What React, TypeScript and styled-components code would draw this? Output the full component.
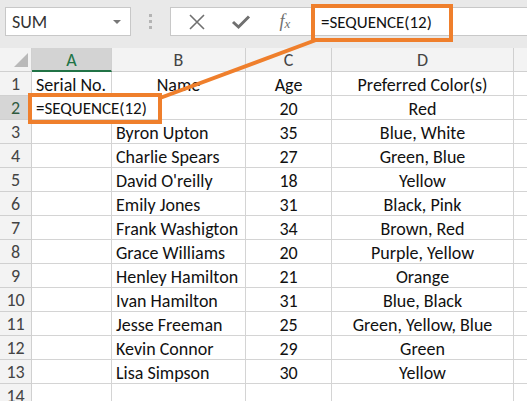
import React from "react";
import styled, { createGlobalStyle } from "styled-components";

const GlobalStyle = createGlobalStyle`
  html, body { margin: 0; padding: 0; background: #ffffff; }
  body { font-family: Carlito, "Open Sans", "Liberation Sans", sans-serif; }
`;

const ORANGE = "#ef7f2c";
const GREEN = "#217346";

type Row = { name: string; age: string; color: string };

const rows: Row[] = [
  { name: "Name", age: "Age", color: "Preferred Color(s)" },
  { name: "", age: "20", color: "Red" },
  { name: "Byron Upton", age: "35", color: "Blue, White" },
  { name: "Charlie Spears", age: "27", color: "Green, Blue" },
  { name: "David O'reilly", age: "18", color: "Yellow" },
  { name: "Emily Jones", age: "31", color: "Black, Pink" },
  { name: "Frank Washigton", age: "34", color: "Brown, Red" },
  { name: "Grace Williams", age: "20", color: "Purple, Yellow" },
  { name: "Henley Hamilton", age: "21", color: "Orange" },
  { name: "Ivan Hamilton", age: "31", color: "Blue, Black" },
  { name: "Jesse Freeman", age: "25", color: "Green, Yellow, Blue" },
  { name: "Kevin Connor", age: "29", color: "Green" },
  { name: "Lisa Simpson", age: "30", color: "Yellow" },
  { name: "", age: "", color: "" },
];

const App = () => {
  return (
    <>
      <GlobalStyle />
      <Page>
        <Toolbar>
          <NameBox>
            <span>SUM</span>
            <Caret />
          </NameBox>
          <Grip>
            <i />
            <i />
            <i />
          </Grip>
          <FormulaBar>
            <BarButton>
              <svg width="16" height="16" viewBox="0 0 16 16">
                <path d="M1 1 L15 15 M15 1 L1 15" stroke="#707070" strokeWidth="1.6" fill="none" />
              </svg>
            </BarButton>
            <BarButton>
              <svg width="20" height="16" viewBox="0 0 20 16">
                <path d="M2 8 L7.5 13 L18 2.5" stroke="#707070" strokeWidth="3" fill="none" />
              </svg>
            </BarButton>
            <BarButton>
              <Fx>
                f<sub>x</sub>
              </Fx>
            </BarButton>
            <FormulaText>=SEQUENCE(12)</FormulaText>
          </FormulaBar>
        </Toolbar>

        <Sheet>
          <Corner>
            <svg width="14" height="14" viewBox="0 0 14 14">
              <path d="M14 0 L14 14 L0 14 Z" fill="#b9b9b9" />
            </svg>
          </Corner>
          <ColHead $active>A</ColHead>
          <ColHead>B</ColHead>
          <ColHead>C</ColHead>
          <ColHead>D</ColHead>
          <ColHead $last />

          {rows.map((r, i) => {
            const n = i + 1;
            return (
              <React.Fragment key={n}>
                <RowHead $active={n === 2}>{n}</RowHead>
                {n === 2 ? (
                  <Cell $open>
                    <Editing>=SEQUENCE(12)</Editing>
                    <Cursor />
                  </Cell>
                ) : (
                  <Cell>{n === 1 ? "Serial No." : ""}</Cell>
                )}
                <Cell $align={n === 1 ? "center" : "left"}>{r.name}</Cell>
                <Cell $align="center">{r.age}</Cell>
                <Cell $align="center">{r.color}</Cell>
                <Cell $last />
              </React.Fragment>
            );
          })}
        </Sheet>

        <Callout style={{ left: 311, top: 4, width: 142, height: 38 }} />
        <Callout style={{ left: 28, top: 93, width: 134, height: 31 }} />
        <Connector width="527" height="401" viewBox="0 0 527 401">
          <line x1="316" y1="40" x2="160" y2="98" stroke={ORANGE} strokeWidth="4" />
        </Connector>
      </Page>
    </>
  );
};

export default App;

const Page = styled.div`
  position: relative;
  width: 527px;
  height: 401px;
  overflow: hidden;
  background: #ffffff;
`;

const Toolbar = styled.div`
  height: 48px;
  background: #e9e9e9;
  display: flex;
  align-items: flex-start;
  padding: 7px 0 0 5px;
  box-sizing: border-box;
`;

const NameBox = styled.div`
  width: 126px;
  height: 29px;
  box-sizing: border-box;
  background: #ffffff;
  border: 1px solid #c8c8c8;
  display: flex;
  align-items: center;
  justify-content: space-between;
  padding: 1px 9px 0 6px;
  font-size: 18px;
  color: #333333;
`;

const Caret = styled.div`
  width: 0;
  height: 0;
  border-left: 4px solid transparent;
  border-right: 4px solid transparent;
  border-top: 4px solid #777777;
`;

const Grip = styled.div`
  width: 39px;
  height: 29px;
  display: flex;
  flex-direction: column;
  align-items: center;
  justify-content: center;
  gap: 3px;

  i {
    display: block;
    width: 3px;
    height: 3px;
    background: #b4b4b4;
  }
`;

const FormulaBar = styled.div`
  flex: 1;
  height: 29px;
  box-sizing: border-box;
  background: #ffffff;
  border: 1px solid #c8c8c8;
  border-right: none;
  display: flex;
  align-items: center;
  padding-left: 4px;
`;

const BarButton = styled.div`
  width: 44px;
  height: 27px;
  display: flex;
  align-items: center;
  justify-content: center;
`;

const Fx = styled.span`
  font-family: "Liberation Serif", serif;
  font-style: italic;
  font-size: 18px;
  color: #707070;

  sub {
    font-size: 13px;
    vertical-align: -1px;
  }
`;

const FormulaText = styled.div`
  margin-left: 14px;
  padding-top: 1px;
  font-size: 17px;
  color: #111111;
`;

const Sheet = styled.div`
  display: grid;
  grid-template-columns: 32px 80px 134px 86px 182px 1fr;
  grid-auto-rows: 24px;
`;

const Corner = styled.div`
  background: #f3f3f3;
  border-right: 1px solid #d0d0d0;
  border-bottom: 1px solid #d0d0d0;
  display: flex;
  align-items: flex-end;
  justify-content: flex-end;
  padding: 0 3px 4px 0;
`;

const ColHead = styled.div<{ $active?: boolean; $last?: boolean }>`
  background: ${(p) => (p.$active ? "#d3d3d3" : "#f3f3f3")};
  color: ${(p) => (p.$active ? GREEN : "#444444")};
  border-right: ${(p) => (p.$last ? "none" : "1px solid #d0d0d0")};
  border-bottom: ${(p) => (p.$active ? `2px solid ${GREEN}` : "1px solid #d0d0d0")};
  display: flex;
  align-items: center;
  justify-content: center;
  padding-top: 1px;
  font-size: 18px;
`;

const RowHead = styled.div<{ $active?: boolean }>`
  background: ${(p) => (p.$active ? "#d6d6d6" : "#f3f3f3")};
  color: ${(p) => (p.$active ? "#2f5a3f" : "#444444")};
  border-right: 1px solid #d0d0d0;
  border-bottom: 1px solid #d0d0d0;
  display: flex;
  align-items: center;
  justify-content: center;
  padding-top: 1px;
  font-size: 18px;
`;

const Cell = styled.div<{ $align?: "left" | "center"; $open?: boolean; $last?: boolean }>`
  position: relative;
  border-right: ${(p) => (p.$open || p.$last ? "none" : "1px solid #d4d4d4")};
  border-bottom: 1px solid #d4d4d4;
  display: flex;
  align-items: center;
  justify-content: ${(p) => (p.$align === "center" ? "center" : "flex-start")};
  padding: 2px 4px 0;
  font-size: 18px;
  color: #111111;
  white-space: nowrap;
  overflow: ${(p) => (p.$open ? "visible" : "hidden")};
  z-index: ${(p) => (p.$open ? 1 : 0)};
`;

const Editing = styled.span`
  font-size: 17px;
`;

const Cursor = styled.span`
  display: inline-block;
  width: 1px;
  height: 20px;
  margin-left: 1px;
  background: #000000;
`;

const Callout = styled.div`
  position: absolute;
  box-sizing: border-box;
  border: 4px solid ${ORANGE};
  pointer-events: none;
  z-index: 3;
`;

const Connector = styled.svg`
  position: absolute;
  left: 0;
  top: 0;
  pointer-events: none;
  z-index: 3;
`;
